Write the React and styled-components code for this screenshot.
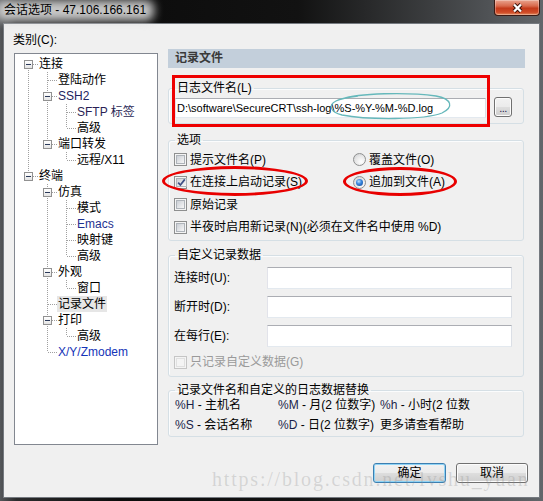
import React from 'react'
import styled, { createGlobalStyle, css } from 'styled-components'

const GlobalStyle = createGlobalStyle`
  html, body {
    margin: 0;
    padding: 0;
    background: #1b1b1b;
  }
  body {
    font-family: "Liberation Sans", "Noto Sans CJK SC", sans-serif;
    font-size: 12px;
    color: #000;
  }
  * {
    box-sizing: border-box;
  }
`

const dotted = '#a0a0a0'
const vLine = (top, h) =>
  `repeating-linear-gradient(to bottom, ${dotted} 0 1px, transparent 1px 2px) 9px ${top}px / 1px ${h}px no-repeat`
const hLine = `repeating-linear-gradient(to right, ${dotted} 0 1px, transparent 1px 2px) 10px 8px / 9px 1px no-repeat`

const Window = styled.div`
  position: relative;
  width: 543px;
  height: 501px;
  display: flex;
  flex-direction: column;
  overflow: hidden;
  background: linear-gradient(to right, #55585b 0%, #2b2c2d 3%, #0c0c0c 22%, #121212 55%, #3d3f41 80%, #62666a 100%);
`

const TitleBar = styled.div`
  height: 23px;
  flex: none;
  display: flex;
  align-items: flex-start;
  justify-content: space-between;
  padding-left: 4px;
`

const Title = styled.span`
  position: relative;
  z-index: 0;
  margin-top: 2px;
  line-height: 16px;
  color: #000;
  &::before {
    content: '';
    position: absolute;
    inset: -2px -8px -3px -8px;
    background: rgba(214, 214, 214, 0.92);
    filter: blur(5px);
    border-radius: 8px;
    z-index: -1;
  }
`

const CloseButton = styled.div`
  width: 46px;
  height: 16px;
  margin-right: 3px;
  border: 1px solid #3b1a14;
  border-top: none;
  border-radius: 0 0 4px 4px;
  background: linear-gradient(#e9a48f 0%, #d8694c 40%, #c33a1b 55%, #cf4a26 82%, #e28c5e 100%);
  box-shadow: inset 0 0 0 1px rgba(255, 255, 255, 0.3);
  display: flex;
  align-items: center;
  justify-content: center;
`

const Client = styled.div`
  flex: 1;
  margin: 0 3px 3px 3px;
  background: #f0f0f0;
  border: 1px solid #757a80;
  display: flex;
  align-items: flex-start;
  padding-left: 10px;
`

const LeftPane = styled.div`
  width: 144px;
  flex: none;
  padding-top: 8px;
`

const Caption = styled.div`
  line-height: 16px;
  margin: 0 0 5px -1px;
`

const TreeBox = styled.div`
  height: 392px;
  background: #fff;
  border: 1px solid #828790;
  padding: 2px 0 0 4px;
`

const TreeRow = styled.div`
  display: flex;
  height: 16px;
`

const Guide = styled.span`
  width: 19px;
  flex: none;
  display: flex;
  align-items: flex-start;
  background: ${p => {
    if (p.$kind === 'pipe') return vLine(0, 16)
    if (p.$kind === 'tee') return `${hLine}, ${vLine(0, 16)}`
    if (p.$kind === 'elbow') return `${hLine}, ${vLine(0, 8)}`
    if (p.$kind === 'down') return `${hLine}, ${vLine(8, 8)}`
    return 'none'
  }};
`

const Expander = styled.span`
  width: 9px;
  height: 9px;
  margin: 4px 0 0 5px;
  border: 1px solid #919191;
  background: linear-gradient(#ffffff, #e4e4e4);
  display: flex;
  align-items: center;
  justify-content: center;
  &::after {
    content: '';
    width: 5px;
    height: 1px;
    background: #2b3a5a;
  }
`

const TreeLabel = styled.span`
  margin-left: 1px;
  line-height: 16px;
  white-space: nowrap;
  color: ${p => p.$tone || '#000'};
  ${p => p.$selected && css`
    background: #e6e6e6;
    padding: 0 1px;
    margin-left: 0;
  `}
`

const RightPane = styled.div`
  width: 357px;
  flex: none;
  margin-left: 10px;
  padding-top: 25px;
`

const SectionHeader = styled.div`
  height: 19px;
  line-height: 19px;
  padding-left: 7px;
  background: #c3cfdb;
  color: #3a3a3a;
  font-weight: bold;
`

const GroupWrap = styled.div`
  position: relative;
  width: 356px;
  margin-top: ${p => p.$top}px;
`

const Group = styled.fieldset`
  margin: 0;
  padding: 0;
  min-width: 0;
  border: 1px solid #d5dfe5;
  border-radius: 3px;
  box-shadow: inset 1px 1px 0 #fbfcfd;
`

const Legend = styled.legend`
  margin-left: 6px;
  padding: 0 2px;
  line-height: 14px;
  height: 14px;
`

const FileBody = styled.div`
  display: flex;
  align-items: flex-start;
  gap: 8px;
  padding: 3px 0 5px 6px;
`

const TextBox = styled.input`
  width: ${p => p.$w}px;
  height: ${p => p.$h}px;
  margin: 0;
  padding: 0 0 0 1px;
  font-family: "Liberation Sans", "Noto Sans CJK SC", sans-serif;
  font-size: 11px;
  color: #000;
  background: #fff;
  border: 1px solid;
  border-color: #abadb3 #dbdfe6 #e3e9ef #e2e3ea;
  outline: none;
`

const btnFace = css`
  border: 1px solid #707070;
  border-radius: 3px;
  background: linear-gradient(#f2f2f2 0%, #ebebeb 48%, #dddddd 52%, #cfcfcf 100%);
  box-shadow: inset 0 0 0 1px #fcfcfc;
`

const BrowseButton = styled.div`
  ${btnFace};
  width: 18px;
  height: 20px;
  margin-top: -1px;
  display: flex;
  align-items: flex-end;
  justify-content: center;
  padding-bottom: 4px;
  font-size: 11px;
  line-height: 8px;
  letter-spacing: -0.5px;
  color: #1a1a50;
`

const OptionsGrid = styled.div`
  display: grid;
  grid-template-columns: 179px 1fr;
  grid-template-rows: 23px 22px 23px 22px;
  padding: 1px 0 2px 5px;
`

const Choice = styled.label`
  display: flex;
  align-items: center;
  gap: 3px;
  white-space: nowrap;
  line-height: 16px;
  grid-column: ${p => (p.$wide ? '1 / span 2' : 'auto')};
  color: ${p => (p.$disabled ? '#9a9a9a' : '#000')};
`

const CheckBox = styled.span`
  width: 13px;
  height: 13px;
  flex: none;
  border: 1px solid ${p => (p.$disabled ? '#c5c5c5' : '#8e8f8f')};
  padding: 1px;
  background: #f4f4f4;
  display: flex;
  span {
    flex: 1;
    border: 1px solid ${p => (p.$disabled ? '#e0e0e0' : '#aeb3b9')};
    background: ${p => (p.$disabled ? '#f4f4f4' : 'linear-gradient(135deg, #cbcfd5, #f7f7f7)')};
    display: flex;
    align-items: center;
    justify-content: center;
  }
`

const Radio = styled.span`
  width: 13px;
  height: 13px;
  flex: none;
  border-radius: 50%;
  border: 1px solid #8e8f8f;
  background: radial-gradient(circle at 65% 70%, #ffffff 0%, #e6e6e6 55%, #c8cbcf 100%);
  display: flex;
  align-items: center;
  justify-content: center;
  &::after {
    content: '';
    display: ${p => (p.$on ? 'block' : 'none')};
    width: 7px;
    height: 7px;
    border-radius: 50%;
    background: radial-gradient(circle at 40% 35%, #bfe4ff 0%, #3c8ae0 40%, #0c3f8e 100%);
  }
`

const FieldsGrid = styled.div`
  display: grid;
  grid-template-columns: 93px 245px;
  grid-template-rows: 22px 22px 22px 16px;
  row-gap: 7px;
  align-items: center;
  padding: 5px 0 6px 5px;
`

const FieldLabel = styled.span`
  line-height: 16px;
`

const SubstGrid = styled.div`
  display: grid;
  grid-template-columns: 103px 102px 1fr;
  grid-template-rows: 16px 16px;
  row-gap: 4px;
  padding: 0 0 3px 6px;
  line-height: 16px;
  white-space: nowrap;
`

const Code = styled.span`
  color: #1a1f4a;
`

const ButtonRow = styled.div`
  display: flex;
  justify-content: flex-end;
  gap: 10px;
  margin: 26px -3px 0 0;
`

const DialogButton = styled.div`
  ${btnFace};
  width: ${p => p.$w}px;
  height: 20px;
  line-height: 18px;
  text-align: center;
  ${p => p.$default && css`
    border-color: #3c7fb1;
    box-shadow: inset 0 0 0 1px #8fd3f5;
  `}
`

const RedBox = styled.div`
  position: absolute;
  left: 4px;
  top: -6px;
  width: 318px;
  height: 52px;
  border: 3px solid #ee0000;
  pointer-events: none;
`

const RedRing = styled.div`
  position: absolute;
  left: ${p => p.$x}px;
  top: ${p => p.$y}px;
  width: ${p => p.$w}px;
  height: ${p => p.$h}px;
  border: 3px solid #e80000;
  border-radius: 50%;
  pointer-events: none;
`

const Scribble = styled.svg`
  position: absolute;
  left: 160px;
  top: 11px;
  pointer-events: none;
`

const Watermark = styled.div`
  position: absolute;
  left: 212px;
  top: 469px;
  font-family: "Liberation Serif", serif;
  font-size: 20px;
  line-height: 20px;
  letter-spacing: 1.8px;
  white-space: nowrap;
  color: rgba(140, 140, 140, 0.28);
  pointer-events: none;
`

const tree = [
  {
    label: '连接',
    children: [
      { label: '登陆动作' },
      { label: 'SSH2', tone: '#1d2560', children: [{ label: 'SFTP 标签', tone: '#2a1f55' }, { label: '高级' }] },
      { label: '端口转发', children: [{ label: '远程/X11' }] },
    ],
  },
  {
    label: '终端',
    children: [
      {
        label: '仿真',
        children: [{ label: '模式' }, { label: 'Emacs', tone: '#1f3290' }, { label: '映射键' }, { label: '高级' }],
      },
      { label: '外观', children: [{ label: '窗口' }] },
      { label: '记录文件', selected: true },
      { label: '打印', children: [{ label: '高级' }] },
      { label: 'X/Y/Zmodem', tone: '#1534b8' },
    ],
  },
]

const flatten = (nodes, level = 0, guides = []) =>
  nodes.flatMap((node, i) => {
    const last = i === nodes.length - 1
    const row = { ...node, level, guides, last, first: level === 0 && i === 0 }
    const kids = node.children ? flatten(node.children, level + 1, [...guides, !last]) : []
    return [row, ...kids]
  })

const rows = flatten(tree)

const junction = (row) => {
  if (row.first) return 'down'
  return row.last ? 'elbow' : 'tee'
}

const Tree = () => (
  <TreeBox>
    {rows.map((row, i) => (
      <TreeRow key={i}>
        {row.guides.map((on, g) => <Guide key={g} $kind={on ? 'pipe' : 'none'} />)}
        <Guide $kind={junction(row)}>{row.children && <Expander />}</Guide>
        <TreeLabel $tone={row.tone} $selected={row.selected}>{row.label}</TreeLabel>
      </TreeRow>
    ))}
  </TreeBox>
)

const Check = ({ on, disabled }) => (
  <CheckBox $disabled={disabled}>
    <span>
      {on && (
        <svg width="9" height="9" viewBox="0 0 9 9">
          <path d="M1.2 4.6 L3.4 7 L7.8 1.4" fill="none" stroke="#3d4f86" strokeWidth="1.7" />
        </svg>
      )}
    </span>
  </CheckBox>
)

const CloseGlyph = () => (
  <svg width="13" height="10" viewBox="0 0 13 10">
    <path d="M3 1.5 L10 8.5 M10 1.5 L3 8.5" stroke="#3a1208" strokeWidth="4.2" />
    <path d="M3 1.5 L10 8.5 M10 1.5 L3 8.5" stroke="#ffffff" strokeWidth="2.3" />
  </svg>
)

const filePath = 'D:\\software\\SecureCRT\\ssh-log\\%S-%Y-%M-%D.log'

export default function App() {
  return (
    <Window>
      <GlobalStyle />
      <TitleBar>
        <Title>会话选项 - 47.106.166.161</Title>
        <CloseButton><CloseGlyph /></CloseButton>
      </TitleBar>

      <Client>
        <LeftPane>
          <Caption>类别(C):</Caption>
          <Tree />
        </LeftPane>

        <RightPane>
          <SectionHeader>记录文件</SectionHeader>

          <GroupWrap $top={13}>
            <Group>
              <Legend>日志文件名(L)</Legend>
              <FileBody>
                <TextBox $w={311} $h={20} readOnly value={filePath} />
                <BrowseButton>...</BrowseButton>
              </FileBody>
            </Group>
            <RedBox />
            <Scribble width="128" height="30" viewBox="0 0 128 30">
              <path
                d="M14 7 C 30 1, 80 0, 108 4 C 124 7, 126 15, 114 21 C 96 28, 40 28, 14 23 C 2 20, 0 13, 8 9 C 14 6, 22 5, 30 4"
                fill="none"
                stroke="#66b8bb"
                strokeWidth="1.3"
              />
            </Scribble>
          </GroupWrap>

          <GroupWrap $top={9}>
            <Group>
              <Legend>选项</Legend>
              <OptionsGrid>
                <Choice><Check />提示文件名(P)</Choice>
                <Choice><Radio />覆盖文件(O)</Choice>
                <Choice><Check on />在连接上启动记录(S)</Choice>
                <Choice><Radio $on />追加到文件(A)</Choice>
                <Choice $wide><Check />原始记录</Choice>
                <Choice $wide><Check />半夜时启用新记录(N)(必须在文件名中使用 %D)</Choice>
              </OptionsGrid>
            </Group>
            <RedRing $x={-6} $y={33} $w={146} $h={30} />
            <RedRing $x={175} $y={34} $w={114} $h={29} />
          </GroupWrap>

          <GroupWrap $top={7}>
            <Group>
              <Legend>自定义记录数据</Legend>
              <FieldsGrid>
                <FieldLabel>连接时(U):</FieldLabel>
                <TextBox $w={245} $h={22} readOnly value="" />
                <FieldLabel>断开时(D):</FieldLabel>
                <TextBox $w={245} $h={22} readOnly value="" />
                <FieldLabel>在每行(E):</FieldLabel>
                <TextBox $w={245} $h={22} readOnly value="" />
                <Choice $wide $disabled><Check disabled />只记录自定义数据(G)</Choice>
              </FieldsGrid>
            </Group>
          </GroupWrap>

          <GroupWrap $top={6}>
            <Group>
              <Legend>记录文件名和自定义的日志数据替换</Legend>
              <SubstGrid>
                <span><Code>%H</Code> - 主机名</span>
                <span><Code>%M</Code> - 月(2 位数字)</span>
                <span><Code>%h</Code> - 小时(2 位数</span>
                <span><Code>%S</Code> - 会话名称</span>
                <span><Code>%D</Code> - 日(2 位数字)</span>
                <span>更多请查看帮助</span>
              </SubstGrid>
            </Group>
          </GroupWrap>

          <ButtonRow>
            <DialogButton $w={73} $default>确定</DialogButton>
            <DialogButton $w={72}>取消</DialogButton>
          </ButtonRow>
        </RightPane>
      </Client>

      <Watermark>https://blog.csdn.net/lvshu_yuan</Watermark>
    </Window>
  )
}
